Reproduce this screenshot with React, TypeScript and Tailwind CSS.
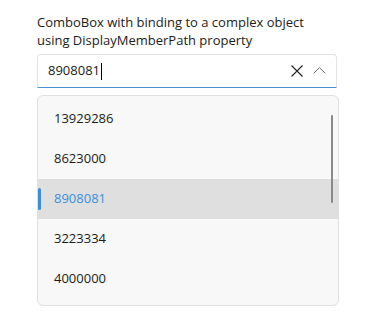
const items = ['13929286', '8623000', '8908081', '3223334', '4000000']
const selected = '8908081'

export default function App() {
  return (
    <div
      className="w-[365px] h-[335px] bg-white text-[#1b1b1b]"
      style={{ fontFamily: '"Segoe UI", "Open Sans", sans-serif' }}
    >
      <div className="pl-[37px] pt-[13px]">
        <div className="text-[13px] leading-[18px] w-[300px]">
          ComboBox with binding to a complex object
          <br />
          using DisplayMemberPath property
        </div>
        <div className="mt-[5px] w-[300px] h-[34px] flex items-center bg-white border border-[#e3e3e3] border-b-[#4a8fd6] rounded-t-[4px]">
          <span className="pl-[10px] text-[13px] flex-1 flex items-center">
            8908081
            <span className="inline-block w-px h-[17px] bg-black ml-[1px]" />
          </span>
          <svg width="12" height="12" viewBox="0 0 12 12" className="mr-[10px]">
            <path d="M0.5 0.5 L11.5 11.5 M11.5 0.5 L0.5 11.5" stroke="#1f1f1f" strokeWidth="1.1" fill="none" />
          </svg>
          <svg width="13" height="7" viewBox="0 0 13 7" className="mr-[10px] mb-[2px]">
            <path d="M0.7 6.3 L6.5 0.7 L12.3 6.3" stroke="#6a6a6a" strokeWidth="1" fill="none" />
          </svg>
        </div>
        <div className="relative mt-[7px] w-[302px] bg-[#f8f8f8] border border-[#e0e0e0] rounded-[6px] pt-[3px] pb-[6px]">
          {items.map((it) => {
            const sel = it === selected
            return (
              <div
                key={it}
                className={`relative h-[40px] flex items-center pl-[16px] text-[13px] ${sel ? 'bg-[#dfdfdf] text-[#3a8fdc]' : ''}`}
              >
                {sel && (
                  <span className="absolute left-[0px] top-[9px] w-[3px] h-[22px] rounded-full bg-[#3a8fdc]" />
                )}
                {it}
              </div>
            )
          })}
          <div className="absolute right-[5px] top-[19px] w-[2px] h-[88px] rounded-full bg-[#8a8a8a]" />
        </div>
      </div>
    </div>
  )
}
